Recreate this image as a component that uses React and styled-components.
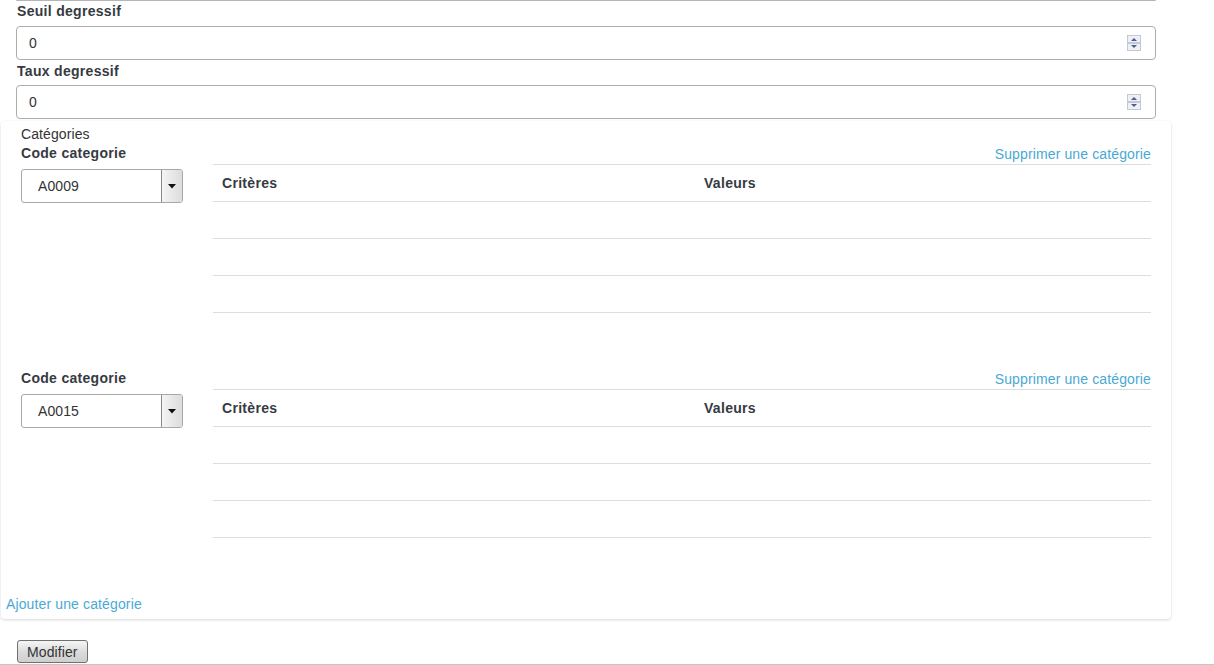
import React from "react";
import styled, { createGlobalStyle } from "styled-components";

const Global = createGlobalStyle`
  html, body { margin: 0; padding: 0; background: #fff; }
  body {
    font-family: "Liberation Sans", Arial, Helvetica, sans-serif;
    font-size: 14px;
    line-height: 20px;
    color: #333;
  }
  * { box-sizing: border-box; }
`;

const Page = styled.div`
  width: 1214px;
  min-height: 665px;
  display: flex;
  flex-direction: column;
`;

const TopRule = styled.div`
  margin-left: 16px;
  width: 1140px;
  height: 1px;
  background: #b5b5b5;
  border-radius: 0 0 3px 3px;
`;

const FieldGroup = styled.div`
  padding-left: 16px;
  width: 1156px;
  display: flex;
  flex-direction: column;
`;

const Label = styled.label`
  display: block;
  font-weight: bold;
  line-height: 20px;
  letter-spacing: 0.3px;
  padding-left: ${(p) => (p.$flush ? "0" : "1px")};
  margin-top: ${(p) => (p.$first ? "0" : p.$flush ? "-1px" : "1px")};
  margin-bottom: ${(p) => (p.$flush ? "1px" : "0")};
  color: #363a42;
`;

const NumberBox = styled.div`
  margin-top: ${(p) => (p.$first ? "5px" : "4px")};
  height: 34px;
  border: 1px solid #adadad;
  border-radius: 4px;
  display: flex;
  align-items: center;
  justify-content: space-between;
  padding: 0 14px 0 12px;
  background: #fff;
`;

const NumberValue = styled.span`
  font-size: 14px;
  color: #333;
`;

const Spinner = () => (
  <svg width="14" height="16" viewBox="0 0 14 16">
    <rect x="0.5" y="0.5" width="13" height="7" fill="#eef0f6" stroke="#c4c8d6" />
    <rect x="0.5" y="8.5" width="13" height="7" fill="#eef0f6" stroke="#c4c8d6" />
    <path d="M4 6 L7 3 L10 6 Z" fill="#4f5c8c" />
    <path d="M4 10 L7 13 L10 10 Z" fill="#4f5c8c" />
  </svg>
);

const Panel = styled.div`
  margin: 2px 0 0 1px;
  width: 1170px;
  background: #fff;
  border-radius: 4px;
  box-shadow: 0 1px 3px rgba(0, 0, 0, 0.16);
  padding: 3px 5px 5px;
`;

const PanelBody = styled.div`
  padding: 0 15px;
`;

const PanelTitle = styled.div`
  font-weight: normal;
  line-height: 20px;
  letter-spacing: 0.1px;
  color: #333;
`;

const CatBlock = styled.div`
  display: flex;
  margin-bottom: 56px;
`;

const LeftCol = styled.div`
  width: 162px;
  flex: none;
  display: flex;
  flex-direction: column;
`;

const RightCol = styled.div`
  flex: 1;
  margin-left: 30px;
  display: flex;
  flex-direction: column;
`;

const SelectBox = styled.div`
  margin-top: 5px;
  height: 34px;
  border: 1px solid #a8a8a8;
  border-radius: 3px;
  display: flex;
  align-items: stretch;
  background: #fff;
  overflow: hidden;
`;

const SelectValue = styled.span`
  flex: 1;
  padding-left: 16px;
  display: flex;
  align-items: center;
  color: #333;
  letter-spacing: 0.1px;
`;

const SelectArrow = styled.span`
  width: 21px;
  border-left: 1px solid #8a8a8a;
  background: linear-gradient(to right, #f4f4f4, #dcdcdc);
  display: flex;
  align-items: center;
  justify-content: center;
`;

const LinkRow = styled.div`
  display: flex;
  justify-content: flex-end;
  line-height: 20px;
`;

const Link = styled.a`
  color: #4aa9d3;
  text-decoration: none;
  cursor: pointer;
  line-height: 20px;
  letter-spacing: 0.13px;
`;

const Table = styled.table`
  width: 100%;
  border-collapse: collapse;
  table-layout: fixed;
  border-top: 1px solid #dddddd;
`;

const Th = styled.th`
  text-align: left;
  font-weight: bold;
  padding: 8px 9px;
  line-height: 20px;
  height: 37px;
  letter-spacing: 0.3px;
  color: #363a42;
`;

const Tr = styled.tr`
  border-bottom: 1px solid #dddddd;
`;

const Td = styled.td`
  padding: 8px;
  height: 37px;
  line-height: 20px;
`;

const Footer = styled.div`
  padding: 21px 0 1px 17px;
`;

const Button = styled.button`
  font-family: "Liberation Sans", Arial, sans-serif;
  font-size: 14px;
  height: 23px;
  padding: 0 9px;
  color: #333;
  border: 1px solid #707070;
  border-radius: 3px;
  background: linear-gradient(to bottom, #f5f5f5, #dadada 55%, #cfcfcf);
  line-height: 20px;
  letter-spacing: 0.1px;
`;

const BottomRule = styled.div`
  height: 1px;
  background: #c6c6c6;
  width: 100%;
`;

const categories = ["A0009", "A0015"];

function CategoryBlock({ code }) {
  return (
    <CatBlock>
      <LeftCol>
        <Label as="div" $flush>Code categorie</Label>
        <SelectBox>
          <SelectValue>{code}</SelectValue>
          <SelectArrow>
            <svg width="8" height="5" viewBox="0 0 8 5">
              <path d="M0 0 L8 0 L4 4.5 Z" fill="#111" />
            </svg>
          </SelectArrow>
        </SelectBox>
      </LeftCol>
      <RightCol>
        <LinkRow>
          <Link>Supprimer une catégorie</Link>
        </LinkRow>
        <Table>
          <colgroup>
            <col style={{ width: "482px" }} />
            <col />
          </colgroup>
          <thead>
            <Tr>
              <Th>Critères</Th>
              <Th>Valeurs</Th>
            </Tr>
          </thead>
          <tbody>
            {[0, 1, 2].map((i) => (
              <Tr key={i}>
                <Td />
                <Td />
              </Tr>
            ))}
          </tbody>
        </Table>
      </RightCol>
    </CatBlock>
  );
}

export default function App() {
  return (
    <Page>
      <Global />
      <TopRule />
      <FieldGroup>
        <Label $first>Seuil degressif</Label>
        <NumberBox $first>
          <NumberValue>0</NumberValue>
          <Spinner />
        </NumberBox>
        <Label>Taux degressif</Label>
        <NumberBox>
          <NumberValue>0</NumberValue>
          <Spinner />
        </NumberBox>
      </FieldGroup>
      <Panel>
        <PanelBody>
          <PanelTitle>Catégories</PanelTitle>
          {categories.map((c) => (
            <CategoryBlock key={c} code={c} />
          ))}
        </PanelBody>
        <Link>Ajouter une catégorie</Link>
      </Panel>
      <Footer>
        <Button>Modifier</Button>
      </Footer>
      <BottomRule />
    </Page>
  );
}
